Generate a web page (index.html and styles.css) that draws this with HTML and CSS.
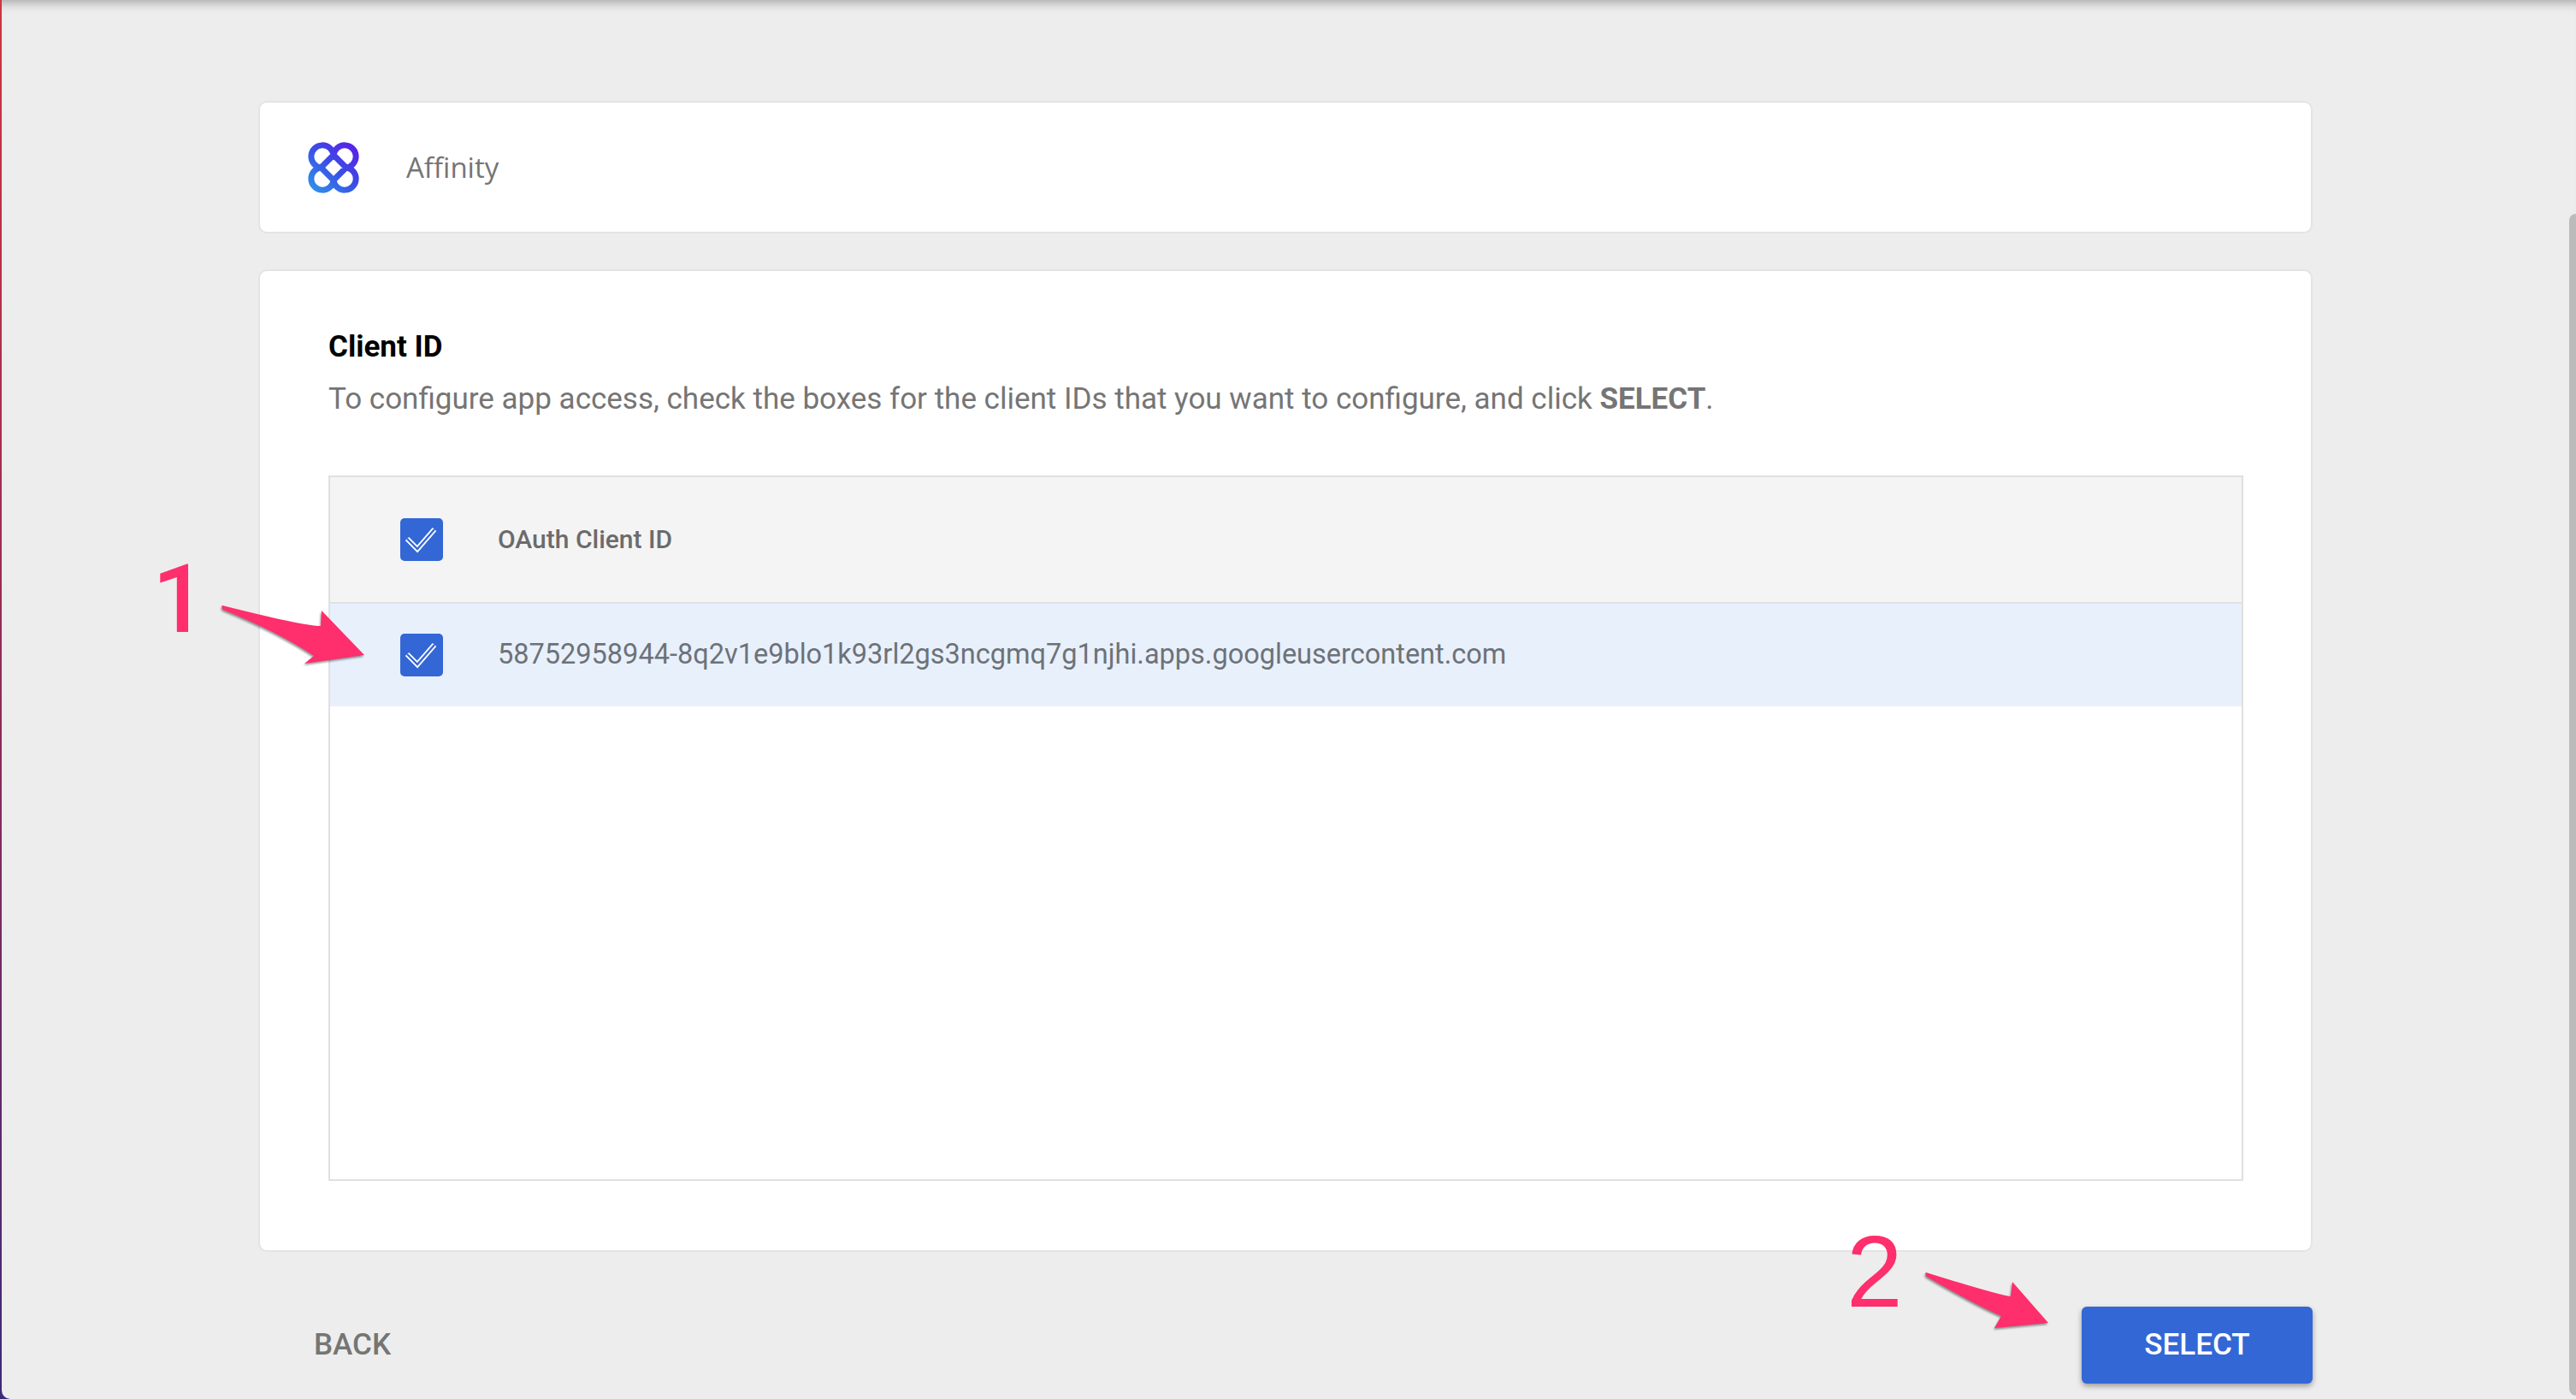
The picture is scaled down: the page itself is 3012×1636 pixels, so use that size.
FILE: index.html
```html
<!DOCTYPE html>
<html lang="en">
<head>
  <meta charset="UTF-8" />
  <title>Client ID</title>
  <link rel="stylesheet" href="styles.css">
</head>
<body>
  <div class="window">
    <div class="content">
      <div class="card app-card">
        <svg class="app-logo" viewBox="0 0 59 59" xmlns="http://www.w3.org/2000/svg">
          <defs>
            <linearGradient id="logoGrad" gradientUnits="userSpaceOnUse" x1="6" y1="56" x2="53" y2="3">
              <stop offset="0" stop-color="#2f93ea"/>
              <stop offset="0.5" stop-color="#3a4fe6"/>
              <stop offset="1" stop-color="#5a1fe8"/>
            </linearGradient>
          </defs>
          <path d="M29.5 15.5A12.5 12.5 0 1 0 15.5 29.5ZM43.5 29.5A12.5 12.5 0 1 0 29.5 15.5ZM29.5 43.5A12.5 12.5 0 1 0 43.5 29.5ZM15.5 29.5A12.5 12.5 0 1 0 29.5 43.5Z" fill="none" stroke="url(#logoGrad)" stroke-width="6.6" stroke-linejoin="round"/>
        </svg>
        <span class="app-name">Affinity</span>
      </div>

      <div class="card client-card">
        <h2 class="client-title">Client ID</h2>
        <p class="client-help">To configure app access, check the boxes for the client IDs that you want to configure, and click <b>SELECT</b>.</p>

        <div class="client-table">
          <div class="table-row table-head">
            <span class="checkbox">
              <svg viewBox="0 0 50 50" xmlns="http://www.w3.org/2000/svg">
                <polyline class="check-outer" points="8,24 20,36 40,13"/>
                <polyline class="check-inner" points="8,24 20,36 40,13"/>
              </svg>
            </span>
            <span class="head-label">OAuth Client ID</span>
          </div>
          <div class="table-row table-selected">
            <span class="checkbox">
              <svg viewBox="0 0 50 50" xmlns="http://www.w3.org/2000/svg">
                <polyline class="check-outer" points="8,24 20,36 40,13"/>
                <polyline class="check-inner" points="8,24 20,36 40,13"/>
              </svg>
            </span>
            <span class="row-label">58752958944-8q2v1e9blo1k93rl2gs3ncgmq7g1njhi.apps.googleusercontent.com</span>
          </div>
        </div>
      </div>

      <div class="footer">
        <button class="btn-back">BACK</button>
        <button class="btn-select">SELECT</button>
      </div>
    </div>

    <div class="scroll-thumb"></div>

    <span class="step-num step-one">1</span>
    <svg class="arrow arrow-one" viewBox="0 0 180 80" xmlns="http://www.w3.org/2000/svg">
      <path d="M5 3Q3 5 6 8Q70 34 112 62L101 71L171 61L121 9L120 27Q100 27 5 3Z"/>
    </svg>
    <span class="step-num step-two">2</span>
    <svg class="arrow arrow-two" viewBox="0 0 150 75" xmlns="http://www.w3.org/2000/svg">
      <path d="M4 3Q2 5 5 8Q60 40 92 54L84 68L147 62L105 14L103 31Q90 30 4 3Z"/>
    </svg>
  </div>
</body>
</html>
```

FILE: styles.css
```css
html, body {
  margin: 0;
  height: 100%;
  overflow: hidden;
}

body {
  font-family: Roboto, sans-serif;
  background: linear-gradient(#d0343f, #8a2a5c 55%, #3c2a78);
}

.window {
  position: relative;
  height: 1636px;
  margin-left: 2px;
  background-color: #ededed;
  border-bottom-left-radius: 10px;
  box-shadow: inset 0 14px 14px -12px rgba(0, 0, 0, 0.35);
  overflow: hidden;
}

.content {
  width: 2402px;
  margin-left: 300px;
  padding-top: 118px;
}

.card {
  background-color: #fff;
  border: 2px solid #e3e3e8;
  border-radius: 10px;
  box-sizing: border-box;
}

.app-card {
  display: flex;
  align-items: center;
  height: 155px;
  padding-left: 55px;
}

.app-logo {
  width: 62px;
  height: 62px;
}

.app-name {
  margin-left: 54px;
  font-family: "Open Sans", sans-serif;
  font-size: 33px;
  color: #757575;
}

.client-card {
  height: 1149px;
  margin-top: 42px;
  padding: 66px 79px 0 80px;
}

.client-title {
  margin: 0;
  font-size: 35px;
  line-height: 46px;
  font-weight: 700;
  color: #000;
}

.client-help {
  margin: 15px 0 0;
  font-size: 35px;
  line-height: 46px;
  color: #757575;
}

.client-table {
  height: 825px;
  margin-top: 66px;
  border: 2px solid #e0e0e0;
  box-sizing: border-box;
}

.table-row {
  display: flex;
  align-items: center;
  padding-left: 82px;
  box-sizing: border-box;
}

.table-head {
  height: 148px;
  background-color: #f4f4f4;
  border-bottom: 2px solid #e0e0e0;
  font-size: 30px;
  font-weight: 500;
  color: #6b6b6b;
}

.head-label {
  margin-bottom: 2px;
}

.table-selected {
  height: 120px;
  background-color: #e8f0fc;
  font-size: 32.5px;
  color: #6d7278;
}

.row-label {
  margin-bottom: 3px;
}

.checkbox {
  width: 50px;
  height: 50px;
  margin-right: 64px;
  background-color: #3367d6;
  border-radius: 5px;
  flex-shrink: 0;
}

.checkbox svg {
  display: block;
}

.check-outer,
.check-inner {
  fill: none;
  stroke-linejoin: miter;
}

.check-outer {
  stroke: #fff;
  stroke-width: 6;
}

.check-inner {
  stroke: #3367d6;
  stroke-width: 2.4;
}

.footer {
  display: flex;
  justify-content: space-between;
  align-items: center;
  margin-top: 64px;
}

.footer button {
  font-family: Roboto, sans-serif;
  font-size: 35px;
  font-weight: 500;
  border: none;
  cursor: pointer;
}

.btn-back {
  margin-left: 65px;
  padding: 0 0 2px;
  background: none;
  color: #757575;
}

.btn-select {
  width: 270px;
  height: 90px;
  padding: 0 0 2px;
  background-color: #3367d6;
  color: #fff;
  border-radius: 6px;
  box-shadow: 0 3px 6px rgba(0, 0, 0, 0.35);
}

.scroll-thumb {
  position: absolute;
  top: 250px;
  right: 0;
  bottom: 4px;
  width: 8px;
  background-color: #bbb;
  border-radius: 10px 0 0 10px;
}

.step-num {
  position: absolute;
  font-family: "Liberation Sans", sans-serif;
  font-size: 118px;
  line-height: 118px;
  color: #ff2e6c;
}

.step-one {
  left: 176px;
  top: 645px;
  font-family: Roboto, sans-serif;
  font-size: 112px;
  line-height: 112px;
  font-weight: 500;
}

.step-two {
  left: 2157px;
  top: 1428px;
}

.arrow {
  position: absolute;
  fill: #ff2e6c;
  filter: drop-shadow(-1px 2px 1px rgba(0, 0, 0, 0.4));
}

.arrow-one {
  left: 253px;
  top: 705px;
  width: 180px;
  height: 80px;
}

.arrow-two {
  left: 2246px;
  top: 1485px;
  width: 150px;
  height: 75px;
}
```
